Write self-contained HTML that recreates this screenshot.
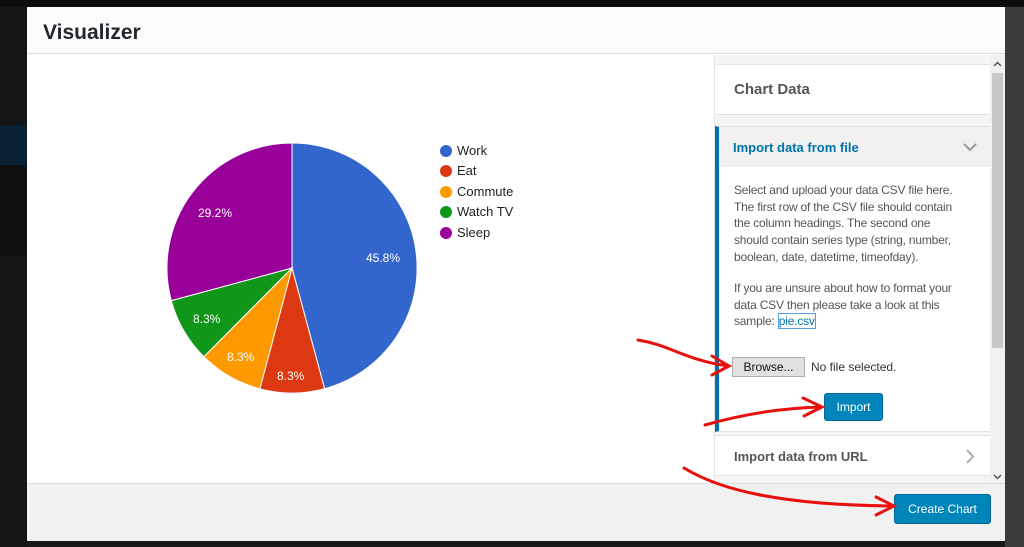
<!DOCTYPE html>
<html><head><meta charset="utf-8"><style>
*{box-sizing:border-box;margin:0;padding:0}
body{width:1024px;height:547px;background:#16181a;position:relative;overflow:hidden;font-family:"Liberation Sans",sans-serif}
.top{position:absolute;left:0;top:0;width:1024px;height:7px;background:#0c0c0c}
.side{position:absolute;left:0;top:7px;width:27px;height:540px;background:#131517}
.side .hl{position:absolute;left:0;top:118px;width:27px;height:40px;background:#0a2233}
.side .sub{position:absolute;left:0;top:158px;width:27px;height:90px;background:#0e1012}
.rt{position:absolute;left:1005px;top:7px;width:19px;height:540px;background:#3a3b3c}
.modal{position:absolute;left:27px;top:7px;width:978px;height:534px;background:#fff}
.hdr{position:absolute;left:0;top:0;width:978px;height:47px;background:#fcfcfc;border-bottom:1px solid #ddd}
.hdr h1{position:absolute;left:16px;top:14px;font-size:21px;font-weight:bold;color:#23282d}
.ftr{position:absolute;left:0;top:476px;width:978px;height:58px;background:#f1f1f1;border-top:1px solid #ddd}
.panel{position:absolute;left:687px;top:48px;width:276px;height:428px;background:#f5f5f5;border-left:1px solid #e5e5e5}
.sb{position:absolute;left:963px;top:48px;width:15px;height:428px;background:#f1f1f1}
.sb .th{position:absolute;left:2px;top:18px;width:11px;height:275px;background:#c8c8c8}
.box{position:absolute;left:0;width:275px;background:#fff;border-top:1px solid #e3e3e3;border-bottom:1px solid #e3e3e3}
.t{position:absolute;font-size:13px;color:#444}
.btn{position:absolute;background:#0085ba;border:1px solid #006799;color:#fff;font-size:12px;text-align:center;border-radius:3px}
</style></head><body>
<div class="top"></div>
<div class="side"><div class="hl"></div><div class="sub"></div></div>
<div class="rt"></div>
<div class="modal">
 <div class="hdr"><h1>Visualizer</h1></div>
 <div class="ftr"></div>
 <svg style="position:absolute;left:0;top:0" width="680" height="454">
  <g transform="translate(-27,-7)" stroke="#fff" stroke-width="1">
   <path d="M292,268 L292,143 A125,125 0 0 1 324.6,388.7 Z" fill="#3366cc"/>
   <path d="M292,268 L324.6,388.7 A125,125 0 0 1 259.9,388.8 Z" fill="#dc3912"/>
   <path d="M292,268 L259.9,388.8 A125,125 0 0 1 203.9,356.7 Z" fill="#ff9900"/>
   <path d="M292,268 L203.9,356.7 A125,125 0 0 1 171.3,300.6 Z" fill="#109618"/>
   <path d="M292,268 L171.3,300.6 A125,125 0 0 1 292,143 Z" fill="#990099"/>
   <g fill="#fff" stroke="none" font-family="Liberation Sans" font-size="12">
    <text x="366" y="262">45.8%</text><text x="277" y="380">8.3%</text>
    <text x="227" y="361">8.3%</text><text x="193" y="323">8.3%</text>
    <text x="198" y="217">29.2%</text>
   </g>
   <g stroke="none" font-family="Liberation Sans" font-size="13" fill="#222">
    <circle cx="446" cy="151" r="6" fill="#3366cc"/><text x="457" y="155">Work</text>
    <circle cx="446" cy="171" r="6" fill="#dc3912"/><text x="457" y="175">Eat</text>
    <circle cx="446" cy="192" r="6" fill="#ff9900"/><text x="457" y="196">Commute</text>
    <circle cx="446" cy="212" r="6" fill="#109618"/><text x="457" y="216">Watch TV</text>
    <circle cx="446" cy="233" r="6" fill="#990099"/><text x="457" y="237">Sleep</text>
   </g>
  </g>
 </svg>
 <div class="panel">
  <div class="box" style="top:9px;height:51px"><div class="t" style="left:19px;top:16px;font-size:15px;font-weight:bold;color:#555">Chart Data</div></div>
  <div class="box" style="top:71px;height:306px;border-left:4px solid #0073aa">
   <div style="position:absolute;left:0;top:0;width:271px;height:40px;background:#f1f1f1"></div>
   <div class="t" style="left:14px;top:13px;font-weight:bold;color:#0073aa">Import data from file</div>
   <svg style="position:absolute;left:244px;top:15px" width="14" height="10"><path d="M1,2 L7,8 L13,2" fill="none" stroke="#999" stroke-width="2"/></svg>
   <div class="t" style="left:15px;top:55px;width:232px;font-size:12px;line-height:16.7px;color:#555;letter-spacing:-0.2px">Select and upload your data CSV file here. The first row of the CSV file should contain the column headings. The second one should contain series type (string, number, boolean, date, datetime, timeofday).</div>
   <div class="t" style="left:15px;top:153px;width:232px;font-size:12px;line-height:16.7px;color:#555;letter-spacing:-0.2px">If you are unsure about how to format your data CSV then please take a look at this sample: <span style="border:1px solid #5b9dd9;color:#0073aa">pie.csv</span></div>
   <div style="position:absolute;left:13px;top:230px;width:73px;height:20px;background:#e1e1e1;border:1px solid #adadad;font-size:12px;text-align:center;line-height:18px;color:#111">Browse...</div>
   <div class="t" style="left:92px;top:233px;font-size:12px;color:#333">No file selected.</div>
   <div class="btn" style="left:105px;top:266px;width:59px;height:28px;line-height:26px">Import</div>
  </div>
  <div class="box" style="top:380px;height:41px"><div class="t" style="left:19px;top:13px;font-weight:bold;color:#555">Import data from URL</div>
   <svg style="position:absolute;left:250px;top:13px" width="10" height="15"><path d="M2,1 L8,7.5 L2,14" fill="none" stroke="#aaa" stroke-width="2"/></svg></div>
 </div>
 <div class="sb"><div class="th"></div>
  <svg style="position:absolute;left:3px;top:6px" width="9" height="6"><path d="M1,5 L4.5,1.5 L8,5" fill="none" stroke="#555" stroke-width="1.5"/></svg>
  <svg style="position:absolute;left:3px;top:419px" width="9" height="6"><path d="M1,1 L4.5,4.5 L8,1" fill="none" stroke="#555" stroke-width="1.5"/></svg>
 </div>
 <div class="btn" style="left:867px;top:487px;width:97px;height:30px;line-height:28px">Create Chart</div>
</div>
<svg style="position:absolute;left:0;top:0" width="1024" height="547" fill="none" stroke="#e8100c" stroke-width="3" stroke-linecap="round">
 <path d="M638,340 C670,345 685,360 728,366"/><path d="M712,356 L729,366 L712,375"/>
 <path d="M705,425 C740,415 780,408 822,407"/><path d="M803,398 L822,407 L804,416"/>
 <path d="M684,468 C720,490 780,505 893,506"/><path d="M876,497 L894,506 L876,515"/>
</svg>
</body></html>
